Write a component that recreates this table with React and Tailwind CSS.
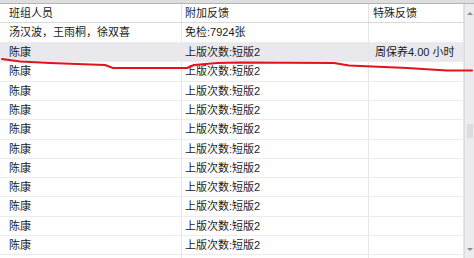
import React from "react";

const rows = [
  { h: "h-[20px]", a: "汤汉波，王雨桐，徐双喜", b: "免检:7924张", c: "" },
  { h: "h-[19px]", a: "陈康", b: "上版次数:短版2", c: "周保养4.00 小时", active: true },
  { h: "h-[20px]", a: "陈康", b: "上版次数:短版2", c: "" },
  { h: "h-[19px]", a: "陈康", b: "上版次数:短版2", c: "" },
  { h: "h-[19px]", a: "陈康", b: "上版次数:短版2", c: "" },
  { h: "h-[20px]", a: "陈康", b: "上版次数:短版2", c: "" },
  { h: "h-[19px]", a: "陈康", b: "上版次数:短版2", c: "" },
  { h: "h-[19px]", a: "陈康", b: "上版次数:短版2", c: "" },
  { h: "h-[19px]", a: "陈康", b: "上版次数:短版2", c: "" },
  { h: "h-[20px]", a: "陈康", b: "上版次数:短版2", c: "" },
  { h: "h-[19px]", a: "陈康", b: "上版次数:短版2", c: "" },
  { h: "h-[19px]", a: "陈康", b: "上版次数:短版2", c: "" },
  { h: "h-[19px]", a: "", b: "", c: "" },
];

// hand-drawn red mark across the selected row
const RedMark = () => (
  <svg className="absolute left-0 top-0 pointer-events-none" width="474" height="258">
    <path
      d="M2 59 L20 61.5 L50 63 L105 65 L113 68 L187 68 L194 65 L217 63 L240 62.5 L334 63 L349 65.5 L407 68 L447 70.5 L472 70.5"
      fill="none"
      stroke="#e3121b"
      strokeWidth="2"
      strokeLinejoin="round"
      strokeLinecap="round"
    />
  </svg>
);

export default function App() {
  return (
    <div
      className="relative w-[474px] h-[258px] overflow-hidden bg-white text-[11px] text-[#1a1a1a]"
      style={{ fontFamily: '"Liberation Sans", "Noto Sans CJK SC", sans-serif' }}
    >
      <div className="h-[4px] bg-[#dedede] border-b border-[#b4b4b4]" />
      <div className="flex">
        <div className="w-[464px] flex flex-col">
          {/* header */}
          <div className="flex h-[19px] border-b border-[#d9d9d9]">
            <div className="w-[182px] pl-[9px] flex items-center border-r border-[#e2e2e2]">班组人员</div>
            <div className="w-[187px] pl-[3px] flex items-center border-r border-[#e2e2e2]">附加反馈</div>
            <div className="flex-1 pl-[4px] flex items-center border-r border-[#e2e2e2]">特殊反馈</div>
          </div>
          {rows.map((r, i) => (
            <div
              key={i}
              className={`flex ${r.h} border-b border-[#ececec] ${r.active ? "bg-[#e9e9ed]" : ""}`}
            >
              <div className="w-[182px] pl-[9px] flex items-center border-r border-[#e6e6e6]">{r.a}</div>
              <div className="w-[187px] pl-[3px] flex items-center border-r border-[#e6e6e6]">{r.b}</div>
              <div className="flex-1 pl-[6px] flex items-center border-r border-[#e6e6e6]">{r.c}</div>
            </div>
          ))}
        </div>
        {/* scrollbar */}
        <div className="w-[10px] h-[254px] bg-[#ececee] flex flex-col items-center border-l border-[#dcdcdc]">
          <div className="h-[18px] flex items-center justify-center">
            <div className="w-0 h-0 border-l-[3px] border-r-[3px] border-b-[3px] border-l-transparent border-r-transparent border-b-[#8a8a8a]" />
          </div>
          <div className="flex-1 w-full flex items-center justify-center">
            <div className="w-[6px] h-[14px] bg-[#dcdce0]" />
          </div>
          <div className="h-[18px] flex items-center justify-center">
            <div className="w-0 h-0 border-l-[3px] border-r-[3px] border-t-[3px] border-l-transparent border-r-transparent border-t-[#8a8a8a]" />
          </div>
        </div>
      </div>
      <RedMark />
    </div>
  );
}
